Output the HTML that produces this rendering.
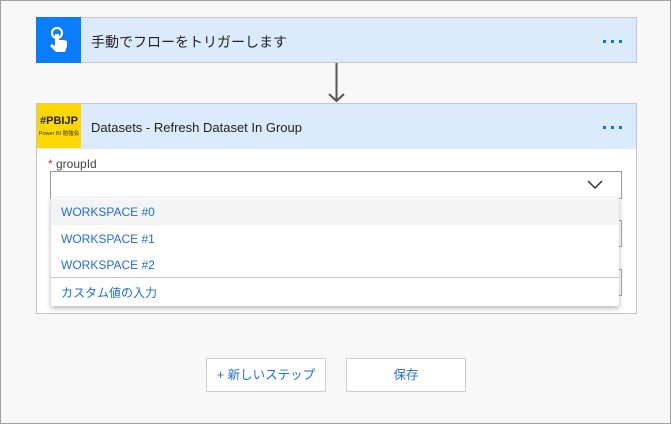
<!DOCTYPE html>
<html><head><meta charset="utf-8"><style>
*{box-sizing:border-box;margin:0;padding:0}
body{width:671px;height:424px;background:#f8f8f8;font-family:"Liberation Sans","Noto Sans CJK JP",sans-serif;position:relative;overflow:hidden}
.frame{position:absolute;left:0;top:0;width:671px;height:424px;border:1px solid #a0a0a0}
.abs{position:absolute}
.card{position:absolute;background:#dbeafc;border:1px solid #c6c6c6}
.dot{position:absolute;width:3px;height:3px;background:#0a78e6}
.item{position:absolute;left:0;width:100%;height:26px;font-size:12px;color:#1e6fd9;padding-left:10px;line-height:26px}
.btn{position:absolute;top:358px;height:34px;width:120px;background:#fff;border:1px solid #cfcfcf;text-align:center;line-height:32px;font-size:12.5px;color:#1e6fd9}
</style></head><body>
<div class="frame"></div>
<div class="card" style="left:36px;top:17px;width:601px;height:46px"></div>
<div class="abs" style="left:36px;top:17px;width:45px;height:46px;background:#0a7cff">
<svg width="45" height="46" viewBox="0 0 45 46"><circle cx="21" cy="16" r="5" fill="none" stroke="#fff" stroke-width="2.2"/><path d="M19 17 v12 l-3 -2 -2 2 6 6 h9 l2 -6 v-5 l-3 -1 -3 0 -2 0 v-6 z" fill="#fff"/></svg>
</div>
<div class="abs" style="left:91px;top:32px;font-size:14px;color:#222">手動でフローをトリガーします</div>
<div class="dot" style="left:603px;top:40px"></div><div class="dot" style="left:611px;top:40px"></div><div class="dot" style="left:619px;top:40px"></div>
<svg class="abs" style="left:326px;top:63px" width="22" height="40"><path d="M10.5 0 V38 M3 31 L10.5 38 L18 31" stroke="#555" stroke-width="2" fill="none"/></svg>
<div class="abs" style="left:36px;top:103px;width:601px;height:211px;background:#fff;border:1px solid #c6c6c6"></div>
<div class="abs" style="left:36px;top:103px;width:601px;height:46px;background:#dbeafc;border:1px solid #c6c6c6;border-bottom:none"></div>
<div class="abs" style="left:37px;top:104px;width:44px;height:44px;background:#ffd800">
<div style="position:absolute;left:0;width:44px;text-align:center;top:11px;font-size:11px;font-weight:bold;color:#222">#PBIJP</div>
<div style="position:absolute;left:0;width:44px;text-align:center;top:25px;font-size:5.5px;color:#333;white-space:nowrap">Power BI 勉強会</div>
</div>
<div class="abs" style="left:91px;top:120px;font-size:13px;color:#222">Datasets - Refresh Dataset In Group</div>
<div class="dot" style="left:603px;top:126px"></div><div class="dot" style="left:611px;top:126px"></div><div class="dot" style="left:619px;top:126px"></div>
<div class="abs" style="left:48px;top:157px;font-size:12px;color:#444"><span style="color:#c33">*</span> groupId</div>
<div class="abs" style="left:50px;top:171px;width:572px;height:28px;background:#fff;border:1px solid #999"></div>
<svg class="abs" style="left:586px;top:179px" width="18" height="12"><path d="M2 2 L9 9 L16 2" stroke="#333" stroke-width="1.5" fill="none"/></svg>
<div class="abs" style="left:617px;top:220px;width:5px;height:27px;border:1px solid #aaa;border-left:none"></div>
<div class="abs" style="left:617px;top:269px;width:5px;height:27px;border:1px solid #aaa;border-left:none"></div>
<div class="abs" style="left:51px;top:198px;width:568px;height:108px;background:#fff;box-shadow:0 2px 5px rgba(0,0,0,.3)">
<div class="item" style="top:1px;background:#f4f4f4">WORKSPACE #0</div>
<div class="item" style="top:28px">WORKSPACE #1</div>
<div class="item" style="top:54px">WORKSPACE #2</div>
<div class="abs" style="left:0;top:79px;width:100%;height:1px;background:#c8c8c8"></div>
<div class="item" style="top:82px">カスタム値の入力</div>
</div>
<div class="btn" style="left:206px">+ 新しいステップ</div>
<div class="btn" style="left:346px">保存</div>
</body></html>
